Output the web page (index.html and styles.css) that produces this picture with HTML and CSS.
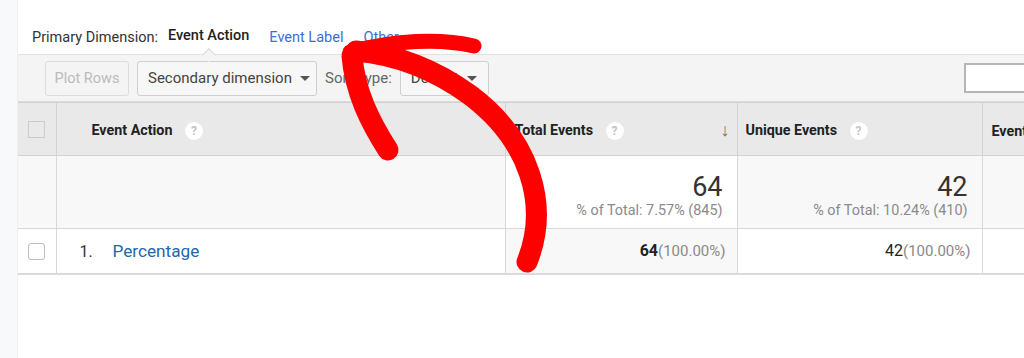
FILE: index.html
```html
<!DOCTYPE html>
<html>
<head>
<meta charset="utf-8">
<link rel="stylesheet" href="styles.css">
</head>
<body>
<div class="page">
  <div class="strip"></div>
  <div class="main">
    <div class="dimbar">
      <span class="dimlabel">Primary Dimension:</span>
      <span class="tab active">Event Action</span>
      <span class="tab link">Event Label</span>
      <span class="tab link">Other <span class="caret small"></span></span>
    </div>
    <div class="toolbar">
      <button class="btn disabled">Plot Rows</button>
      <div class="select wide">Secondary dimension <span class="caret"></span></div>
      <span class="sortlabel">Sort Type:</span>
      <div class="select narrow">Default <span class="caret"></span></div>
      <div class="search"></div>
    </div>
    <table class="grid">
      <colgroup>
        <col class="c0"><col class="c1"><col class="c2"><col class="c3"><col class="c4">
      </colgroup>
      <tr class="head">
        <td class="chk"><span class="box sq"></span></td>
        <td class="h1">Event Action <span class="help">?</span></td>
        <td class="h2"><div class="hwrap"><span>Total Events <span class="help">?</span></span><span class="sortarrow">&#8595;</span></div></td>
        <td class="h3">Unique Events <span class="help">?</span></td>
        <td class="h4">Event Value</td>
      </tr>
      <tr class="totals">
        <td class="chk"></td>
        <td></td>
        <td class="num sorted"><div class="big">64</div><div class="sub">% of Total: 7.57% (845)</div></td>
        <td class="num"><div class="big">42</div><div class="sub">% of Total: 10.24% (410)</div></td>
        <td></td>
      </tr>
      <tr class="row">
        <td class="chk"><span class="box rd"></span></td>
        <td class="name"><span class="idx">1.</span><span class="plink">Percentage</span></td>
        <td class="val sorted"><b>64</b><span class="pct">(100.00%)</span></td>
        <td class="val"><span class="plain">42</span><span class="pct">(100.00%)</span></td>
        <td></td>
      </tr>
    </table>
  </div>
</div>
<svg class="arrow" width="1024" height="358" viewBox="0 0 1024 358">
  <path d="M527,262 C550,205 530,140 470,95 C430,66 390,54 356,51" fill="none" stroke="#ff0000" stroke-width="21" stroke-linecap="round"/>
  <path d="M350,52 C395,40 440,38 474,46" fill="none" stroke="#ff0000" stroke-width="15" stroke-linecap="round"/>
  <path d="M352,56 C355,92 370,122 388,150" fill="none" stroke="#ff0000" stroke-width="21" stroke-linecap="round"/>
</svg>
</body>
</html>
```
FILE: styles.css
```css
* { box-sizing: border-box; }
html, body { margin: 0; padding: 0; }
body {
  width: 1024px; height: 358px; overflow: hidden; position: relative;
  font-family: Roboto, "Liberation Sans", Arial, sans-serif;
  background: #fff; color: #333;
}
.page { display: flex; height: 358px; }
.strip { width: 18px; flex: none; background: #f8f9fa; border-right: 1px solid #eef0f2; }
.main { flex: 1; overflow: hidden; }

.dimbar {
  height: 55px; padding: 20px 0 0 14px; display: flex; align-items: center;
  border-bottom: 1px solid #e2e2e2; font-size: 14.5px; white-space: nowrap;
}
.dimbar > span { height: 34px; display: flex; align-items: center; }
.dimlabel { color: #333; margin-right: 10px; }
.tab { position: relative; margin-right: 20px; }
.tab.active { font-weight: 500; color: #222; font-size: 14.5px; padding-bottom: 4px; }
.tab.active::after {
  content: ""; position: absolute; left: 36px; bottom: -6px; width: 9px; height: 9px;
  background: #f4f4f4; border-left: 1px solid #dcdcdc; border-top: 1px solid #dcdcdc;
  transform: rotate(45deg);
}
.tab.link { color: #3b6fd6; }
.caret {
  display: inline-block; width: 0; height: 0; margin-left: 8px;
  border-left: 5px solid transparent; border-right: 5px solid transparent; border-top: 5px solid #555;
}
.caret.small { border-top-color: #aaa; margin-left: 5px; }

.toolbar {
  height: 47px; background: #f4f4f4; display: flex; align-items: center;
  padding-left: 27px; border-bottom: 1px solid #dadada; white-space: nowrap;
}
.btn {
  height: 35px; width: 84px; font: inherit; font-size: 14.5px; border-radius: 3px;
  border: 1px solid #dcdcdc; background: #f4f4f4; color: #bbb; padding: 0;
}
.select {
  height: 35px; display: flex; align-items: center; justify-content: space-between;
  border: 1px solid #cfcfcf; border-radius: 3px; background: #f7f7f7;
  color: #444; font-size: 15px; padding: 0 11px 0 10px;
}
.select.wide { width: 180px; margin-left: 8px; }
.select.narrow { width: 89px; }
.sortlabel { color: #666; font-size: 15px; margin: 0 8px 0 8px; }
.search {
  margin-left: auto; width: 70px; height: 30px; margin-right: -10px;
  background: #fff; border: 2px solid #b5b5b5; border-right: none;
}

.grid { border-collapse: collapse; table-layout: fixed; width: 1024px; }
.c0 { width: 38px; } .c1 { width: 449px; } .c2 { width: 232px; } .c3 { width: 245px; } .c4 { width: 60px; }
.grid td { border: 1px solid #d8d8d8; padding: 0; white-space: nowrap; overflow: hidden; }
.grid td:first-child { border-left: none; }
.head td { height: 53px; background: #e9e9e9; font-weight: 700; font-size: 14.3px; color: #222; border-color: #d2d2d2; padding-top: 4px; }
.head .h1 { padding-left: 35px; }
.head .h2 { padding: 4px 7px 0 9px; }
.head .h3 { padding-left: 8px; }
.head .h4 { padding-left: 9px; }
.head .chk { padding-top: 0; }
.hwrap { display: flex; justify-content: space-between; align-items: center; }
.help {
  display: inline-flex; align-items: center; justify-content: center; vertical-align: middle;
  width: 18px; height: 18px; border-radius: 50%; background: #fff; color: #c4c4c4;
  font-size: 12px; font-weight: 700; margin-left: 9px; margin-top: -2px;
}
.sortarrow { color: #777; font-size: 18px; font-weight: 700; margin-top: -3px; }
.chk { text-align: center; }
.box { display: inline-block; width: 17px; height: 17px; vertical-align: middle; border: 1px solid #ccc; }
.box.sq { background: #e9e9e9; }
.box.rd { background: #fff; border-radius: 3px; border-color: #bdbdbd; }

.totals td { height: 73px; background: #f8f8f8; }
.totals td.sorted { background: #fff; }
.num { text-align: right; padding-right: 14px !important; vertical-align: top; padding-top: 16px !important; }
.big { font-size: 27px; color: #333; line-height: 30px; }
.sub { font-size: 14.4px; color: #8a8a8a; line-height: 17px; margin-top: 0; }

.row td { height: 45px; background: #fff; border-bottom: 2px solid #dadada; }
.row td.sorted { background: #f8f8f8; }
.name { padding-left: 23px !important; }
.idx { font-size: 16px; color: #333; display: inline-block; width: 33px; }
.plink { font-size: 17.2px; color: #2366ad; }
.val { text-align: right; padding-right: 11px !important; font-size: 16px; color: #222; }
.val b { font-weight: 700; }
.pct { color: #888; font-size: 15px; }

.arrow { position: absolute; left: 0; top: 0; pointer-events: none; }
```
